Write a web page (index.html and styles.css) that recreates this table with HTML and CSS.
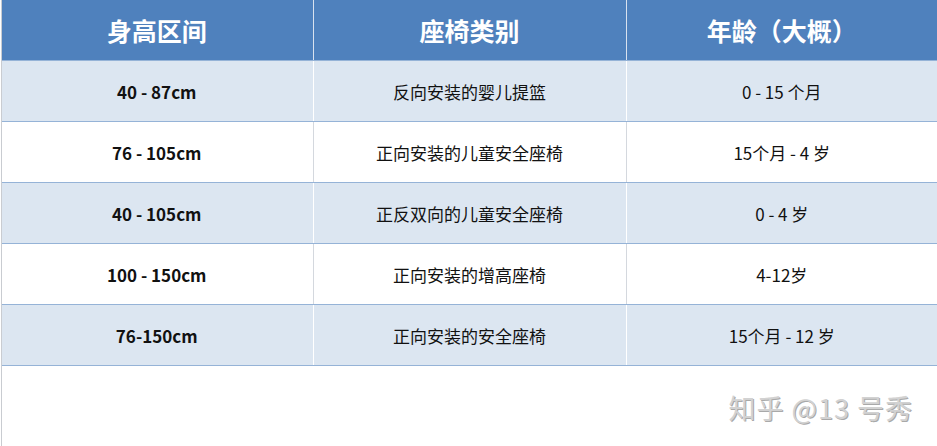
FILE: index.html
```html
<!DOCTYPE html>
<html lang="zh">
<head>
<meta charset="utf-8">
<link rel="stylesheet" href="styles.css">
</head>
<body>
<div class="sheet">
  <table class="grid">
    <colgroup><col class="c1"><col class="c2"><col class="c3"></colgroup>
    <thead>
      <tr><th>身高区间</th><th>座椅类别</th><th>年龄（大概）</th></tr>
    </thead>
    <tbody>
      <tr class="band"><td class="h">40 - 87cm</td><td>反向安装的婴儿提篮</td><td>0 - 15 个月</td></tr>
      <tr><td class="h">76 - 105cm</td><td>正向安装的儿童安全座椅</td><td>15个月 - 4 岁</td></tr>
      <tr class="band"><td class="h">40 - 105cm</td><td>正反双向的儿童安全座椅</td><td>0 - 4 岁</td></tr>
      <tr><td class="h">100 - 150cm</td><td>正向安装的增高座椅</td><td>4-12岁</td></tr>
      <tr class="band"><td class="h">76-150cm</td><td>正向安装的安全座椅</td><td>15个月 - 12 岁</td></tr>
    </tbody>
  </table>
  <div class="mark">知乎 @13 号秀</div>
</div>
</body>
</html>
```
FILE: styles.css
```css
html, body { margin: 0; padding: 0; background: #fff; }
body { font-family: "Noto Sans CJK SC", "Noto Sans", sans-serif; }
.sheet {
  position: relative;
  width: 936px;
  height: 446px;
  margin-left: 1px;
  border-left: 1px solid #c9ccd1;
  box-sizing: border-box;
  overflow: hidden;
}
.grid {
  width: 936px;
  border-collapse: collapse;
  table-layout: fixed;
  margin-left: -1px;
}
.c1 { width: 312px; }
.c2 { width: 313px; }
.c3 { width: 311px; }
.grid th {
  height: 60px;
  padding: 0;
  background: #4f81bd;
  color: #fff;
  font-size: 25px;
  font-weight: 700;
  border-bottom: 1px solid #95b3d7;
  border-right: 1px solid #d9e2ef;
  text-align: center;
  vertical-align: middle;
}
.grid td {
  height: 60px;
  padding: 0;
  font-size: 17px;
  color: #111;
  text-align: center;
  vertical-align: middle;
  border-bottom: 1px solid #95b3d7;
  border-right: 1px solid #d4d8de;
}
.grid tr.band td { background: #dce6f1; border-right-color: #ffffff; }
.grid th:last-child, .grid td:last-child { border-right: none; }
.grid td.h { font-weight: 700; font-size: 17px; }
.mark {
  position: absolute;
  right: 24px;
  top: 388px;
  font-size: 27px;
  color: #d2d2d2;
  letter-spacing: 1px;
  text-shadow: 1px 1px 0 #a9a9a9;
}
```
